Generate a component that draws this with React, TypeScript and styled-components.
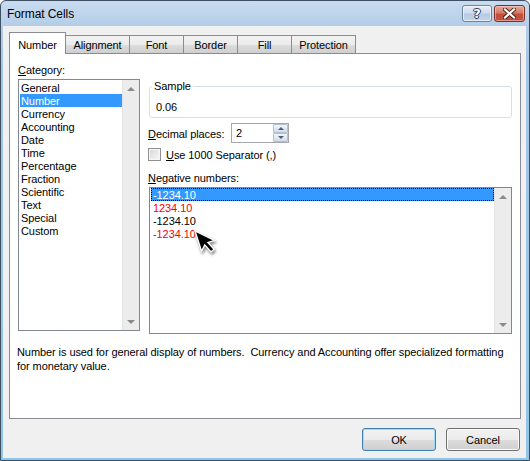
import React from 'react';
import styled, { createGlobalStyle, css } from 'styled-components';

const GlobalStyle = createGlobalStyle`
	html, body {
		margin: 0;
		padding: 0;
		background: #ffffff;
	}
	body {
		font-family: 'Liberation Sans', Arial, sans-serif;
		font-size: 11px;
		letter-spacing: -0.08px;
		color: #000;
	}
	* {
		box-sizing: border-box;
	}
`;

const Window = styled.div`
	position: relative;
	width: 530px;
	height: 461px;
	display: flex;
	flex-direction: column;
	border: 1px solid #3f4e60;
	border-radius: 6px 6px 0 0;
	background: linear-gradient(to bottom, #c8dcf1 0px, #b4cde8 25px, #a4c6e8 60px, #8ec6e9 100%);
	overflow: hidden;
`;

const TitleBar = styled.div`
	height: 25px;
	display: flex;
	align-items: center;
	padding: 0 4px 0 6px;
	gap: 2px;
`;

const Title = styled.span`
	flex: 1;
	font-size: 12px;
	padding-top: 1px;
	color: #000;
`;

const CaptionButton = styled.div<{ $close?: boolean }>`
	width: ${(p) => (p.$close ? 31 : 30)}px;
	height: 17px;
	border-radius: 3px;
	display: flex;
	align-items: center;
	justify-content: center;
	${(p) =>
		p.$close
			? css`
					border: 1px solid #7a3227;
					background: linear-gradient(to bottom, #e9aa9c 0%, #d57a68 45%, #c44f3c 55%, #c0513f 100%);
					box-shadow: inset 0 0 0 1px rgba(255, 220, 210, 0.5);
			  `
			: css`
					border: 1px solid #6e839e;
					background: linear-gradient(to bottom, #e6eef7 0%, #cddcee 45%, #b6cbe3 55%, #c3d5ea 100%);
					box-shadow: inset 0 0 0 1px rgba(255, 255, 255, 0.6);
			  `}
`;

const HelpGlyph = styled.span`
	font-family: 'DejaVu Sans', sans-serif;
	font-weight: bold;
	font-size: 13px;
	line-height: 13px;
	color: #fff;
	text-shadow: 0 0 1px #2f3f55, 1px 0 0 #2f3f55, -1px 0 0 #2f3f55, 0 1px 0 #2f3f55, 0 -1px 0 #2f3f55;
`;

const Client = styled.div`
	flex: 1;
	margin: 0 3px 2px 2px;
	background: #f0f0f0;
	display: flex;
	flex-direction: column;
	padding: 6px 5px 0 6px;
`;

const TabStrip = styled.div`
	display: flex;
	align-items: flex-end;
	height: 22px;
	margin-bottom: -1px;
	position: relative;
	z-index: 1;
`;

const Tab = styled.div<{ $active?: boolean; $w: number }>`
	width: ${(p) => p.$w}px;
	margin-left: -1px;
	border: 1px solid #898c95;
	border-bottom: none;
	display: flex;
	justify-content: center;
	align-items: center;
	${(p) =>
		p.$active
			? css`
					height: 22px;
					padding-top: 2px;
					background: #ffffff;
					position: relative;
					z-index: 2;
					&:first-child {
						margin-left: 0;
					}
			  `
			: css`
					height: 18px;
					margin-bottom: 1px;
					background: linear-gradient(to bottom, #f2f2f2 0%, #ebebeb 50%, #dddddd 51%, #cfcfcf 100%);
			  `}
`;

const Panel = styled.div`
	height: 366px;
	border: 1px solid #898c95;
	background: #ffffff;
	display: flex;
	flex-direction: column;
`;

const MainGrid = styled.div`
	display: grid;
	grid-template-columns: 122px 364px;
	grid-template-rows: 13px auto;
	column-gap: 8px;
	row-gap: 2px;
	padding: 10px 0 0 8px;
	align-items: start;
`;

const FieldLabel = styled.div`
	line-height: 13px;
	height: 13px;
	white-space: nowrap;
`;

const ListBox = styled.div<{ $h: number }>`
	height: ${(p) => p.$h}px;
	border: 1px solid #828790;
	background: #ffffff;
	display: flex;
`;

const ListItems = styled.div`
	flex: 1;
	padding: 1px 0 0 1px;
`;

const ListItem = styled.div<{ $selected?: boolean }>`
	height: 13px;
	line-height: 14px;
	padding-left: 1px;
	white-space: nowrap;
	${(p) =>
		p.$selected &&
		css`
			background: #3399ff;
			color: #ffffff;
		`}
`;

const NegItems = styled.div`
	flex: 1;
	padding: 0 0 0 1px;
`;

const NegItem = styled.div<{ $selected?: boolean; $red?: boolean }>`
	height: 13px;
	line-height: 12px;
	padding-left: 1px;
	border: 1px solid transparent;
	color: ${(p) => (p.$red ? '#ff0000' : '#000000')};
	${(p) =>
		p.$selected &&
		css`
			background: #3399ff;
			color: #ffffff;
			border: 1px dotted #000000;
		`}
`;

const ScrollBar = styled.div`
	width: 17px;
	background: #ececec;
	border-left: 1px solid #e3e3e3;
	display: flex;
	flex-direction: column;
	justify-content: space-between;
`;

const ScrollButton = styled.div`
	height: 17px;
	display: flex;
	align-items: center;
	justify-content: center;
`;

const Arrow = styled.div<{ $down?: boolean; $color?: string; $size?: number }>`
	width: 0;
	height: 0;
	border-left: ${(p) => p.$size ?? 4}px solid transparent;
	border-right: ${(p) => p.$size ?? 4}px solid transparent;
	${(p) =>
		p.$down
			? css`
					border-top: ${p.$size ?? 4}px solid ${p.$color ?? '#8a8a8a'};
			  `
			: css`
					border-bottom: ${p.$size ?? 4}px solid ${p.$color ?? '#8a8a8a'};
			  `}
`;

const RightColumn = styled.div`
	display: flex;
	flex-direction: column;
`;

const GroupBox = styled.fieldset`
	margin: 2px 0 0 1px;
	min-width: 0;
	padding: 8px 6px 4px 6px;
	border: 1px solid #d5dfe5;
	border-radius: 3px;
`;

const GroupLegend = styled.legend`
	padding: 0 2px;
	margin-left: -4px;
	line-height: 11px;
	font-size: 11px;
`;

const SampleValue = styled.div`
	line-height: 14px;
	height: 13px;
`;

const SpinRow = styled.div`
	display: flex;
	align-items: center;
	margin-top: 5px;
`;

const SpinLabel = styled(FieldLabel)`
	width: 83px;
	line-height: 14px;
`;

const SpinBox = styled.div`
	width: 58px;
	height: 20px;
	border: 1px solid #a3a6ac;
	background: #ffffff;
	display: flex;
`;

const SpinValue = styled.div`
	flex: 1;
	padding-left: 4px;
	line-height: 19px;
`;

const SpinButtons = styled.div`
	width: 15px;
	display: flex;
	flex-direction: column;
`;

const SpinButton = styled.div`
	flex: 1;
	border: 1px solid #b1c0d3;
	border-radius: 1px;
	background: linear-gradient(to bottom, #f3f6fa 0%, #e1e9f3 50%, #d2dcea 100%);
	display: flex;
	align-items: center;
	justify-content: center;
`;

const CheckRow = styled.div`
	display: flex;
	align-items: center;
	gap: 5px;
	margin-top: 5px;
	height: 13px;
	line-height: 14px;
`;

const CheckBox = styled.div`
	width: 13px;
	height: 13px;
	border: 1px solid #8e8f8f;
	background: linear-gradient(135deg, #d6d6d6 0%, #ececec 60%, #f8f8f8 100%);
	box-shadow: inset 0 0 0 1px #f6f6f6;
`;

const NegLabel = styled(FieldLabel)`
	margin-top: 10px;
	line-height: 14px;
`;

const NegList = styled(ListBox)`
	margin: 3px 0 0 1px;
`;

const Description = styled.div`
	margin-top: 11px;
	padding-left: 7px;
	line-height: 14px;
	white-space: pre;
`;

const ButtonRow = styled.div`
	display: flex;
	justify-content: flex-end;
	gap: 10px;
	margin-top: 9px;
	padding-right: 1px;
`;

const DialogButton = styled.div<{ $default?: boolean }>`
	width: 74px;
	height: 23px;
	border: 1px solid ${(p) => (p.$default ? '#3c7fb1' : '#707070')};
	border-radius: 3px;
	background: linear-gradient(to bottom, #f2f2f2 0%, #ebebeb 50%, #dddddd 51%, #cfcfcf 100%);
	box-shadow: inset 0 0 0 1px ${(p) => (p.$default ? '#9fdcf7' : '#fbfbfb')};
	display: flex;
	align-items: center;
	justify-content: center;
	padding-top: 1px;
`;

const Pointer = styled.svg`
	position: absolute;
	left: 192px;
	top: 228px;
	overflow: visible;
	filter: drop-shadow(1px 2px 1.5px rgba(0, 0, 0, 0.5));
`;

const categories = [
	'General',
	'Number',
	'Currency',
	'Accounting',
	'Date',
	'Time',
	'Percentage',
	'Fraction',
	'Scientific',
	'Text',
	'Special',
	'Custom',
];

const negatives = [
	{ text: '-1234.10', red: false },
	{ text: '1234.10', red: true },
	{ text: '-1234.10', red: false },
	{ text: '-1234.10', red: true },
];

const tabs = [
	{ label: 'Number', w: 57 },
	{ label: 'Alignment', w: 65 },
	{ label: 'Font', w: 55 },
	{ label: 'Border', w: 55 },
	{ label: 'Fill', w: 55 },
	{ label: 'Protection', w: 65 },
];

function VerticalScroll() {
	return (
		<ScrollBar>
			<ScrollButton>
				<Arrow $size={4} />
			</ScrollButton>
			<ScrollButton>
				<Arrow $down $size={4} />
			</ScrollButton>
		</ScrollBar>
	);
}

function App() {
	return (
		<>
			<GlobalStyle />
			<Window>
				<TitleBar>
					<Title>Format Cells</Title>
					<CaptionButton>
						<HelpGlyph>?</HelpGlyph>
					</CaptionButton>
					<CaptionButton $close>
						<svg width="13" height="11" viewBox="0 0 13 11">
							<path d="M2 1.5 L11 9.5 M11 1.5 L2 9.5" stroke="#4a1a14" strokeWidth="4" strokeLinecap="square" />
							<path d="M2 1.5 L11 9.5 M11 1.5 L2 9.5" stroke="#ffffff" strokeWidth="2.2" strokeLinecap="square" />
						</svg>
					</CaptionButton>
				</TitleBar>
				<Client>
					<TabStrip>
						{tabs.map((t, i) => (
							<Tab key={t.label} $w={t.w} $active={i === 0}>
								{t.label}
							</Tab>
						))}
					</TabStrip>
					<Panel>
						<MainGrid>
							<FieldLabel>
								<u>C</u>ategory:
							</FieldLabel>
							<div />
							<ListBox $h={252}>
								<ListItems>
									{categories.map((c) => (
										<ListItem key={c} $selected={c === 'Number'}>
											{c}
										</ListItem>
									))}
								</ListItems>
								<VerticalScroll />
							</ListBox>
							<RightColumn>
								<GroupBox>
									<GroupLegend>Sample</GroupLegend>
									<SampleValue>0.06</SampleValue>
								</GroupBox>
								<SpinRow>
									<SpinLabel>
										<u>D</u>ecimal places:
									</SpinLabel>
									<SpinBox>
										<SpinValue>2</SpinValue>
										<SpinButtons>
											<SpinButton>
												<Arrow $size={3} $color="#4c607f" />
											</SpinButton>
											<SpinButton>
												<Arrow $down $size={3} $color="#4c607f" />
											</SpinButton>
										</SpinButtons>
									</SpinBox>
								</SpinRow>
								<CheckRow>
									<CheckBox />
									<span>
										<u>U</u>se 1000 Separator (,)
									</span>
								</CheckRow>
								<NegLabel>
									<u>N</u>egative numbers:
								</NegLabel>
								<NegList $h={147}>
									<NegItems>
										{negatives.map((n, i) => (
											<NegItem key={i} $red={n.red} $selected={i === 0}>
												{n.text}
											</NegItem>
										))}
									</NegItems>
									<VerticalScroll />
								</NegList>
							</RightColumn>
						</MainGrid>
						<Description>
							Number is used for general display of numbers.  Currency and Accounting offer specialized formatting
							{'\n'}for monetary value.
						</Description>
					</Panel>
					<ButtonRow>
						<DialogButton $default>OK</DialogButton>
						<DialogButton>Cancel</DialogButton>
					</ButtonRow>
				</Client>
				<Pointer width="16" height="24" viewBox="0 0 16 24">
					<g transform="translate(2 2) scale(1.25) rotate(-18) translate(-2 -2)">
						<path
							d="M2 2 L2 19 L6 15 L9 22 L12 20.6 L9 14 L14.5 14 Z"
							fill="#000000"
							stroke="#ffffff"
							strokeWidth="1.1"
							strokeLinejoin="miter"
						/>
					</g>
				</Pointer>
			</Window>
		</>
	);
}

export default App;
